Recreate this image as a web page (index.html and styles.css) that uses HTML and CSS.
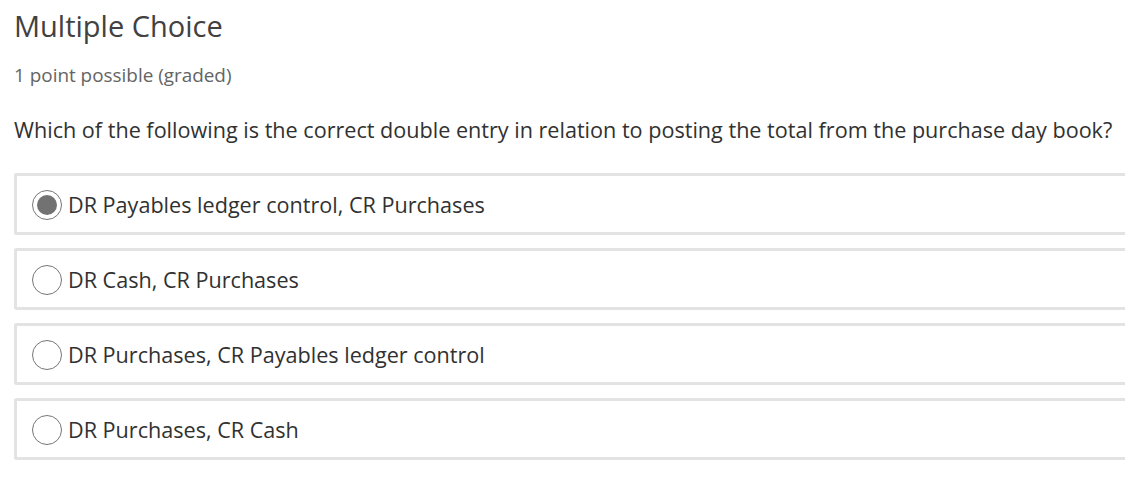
FILE: index.html
```html
<!DOCTYPE html>
<html>
<head>
<meta charset="utf-8">
<link rel="stylesheet" href="styles.css">
</head>
<body>
<div class="problem">
  <h3 class="title">Multiple Choice</h3>
  <div class="points">1 point possible (graded)</div>
  <p class="question">Which of the following is the correct double entry in relation to posting the total from the purchase day book?</p>
  <div class="choices">
    <label class="choice">
      <span class="radio checked"></span>
      <span class="label-text">DR Payables ledger control, CR Purchases</span>
    </label>
    <label class="choice">
      <span class="radio"></span>
      <span class="label-text">DR Cash, CR Purchases</span>
    </label>
    <label class="choice">
      <span class="radio"></span>
      <span class="label-text">DR Purchases, CR Payables ledger control</span>
    </label>
    <label class="choice">
      <span class="radio"></span>
      <span class="label-text">DR Purchases, CR Cash</span>
    </label>
  </div>
</div>
</body>
</html>
```
FILE: styles.css
```css
html, body {
  margin: 0;
  padding: 0;
  background: #ffffff;
}
body {
  font-family: "Open Sans", "DejaVu Sans", sans-serif;
  color: #313131;
}
.problem {
  padding: 0 6px 0 14px;
}
.title {
  margin: 0;
  padding-top: 6px;
  font-size: 29px;
  font-weight: 400;
  line-height: 40px;
  color: #414141;
}
.points {
  margin-top: 18px;
  font-size: 18.9px;
  line-height: 22px;
  color: #646464;
}
.question {
  margin: 30px 0 0 0;
  font-size: 21.6px;
  line-height: 28px;
  color: #313131;
  white-space: nowrap;
}
.choices {
  margin-top: 29px;
  display: flex;
  flex-direction: column;
  gap: 13px;
}
.choice {
  display: flex;
  align-items: center;
  height: 56px;
  border: 3px solid #e3e3e3;
  border-right: none;
  border-radius: 3px 0 0 3px;
  padding-left: 15px;
  box-sizing: content-box;
}
.radio {
  width: 28px;
  height: 28px;
  border: 1px solid #767676;
  border-radius: 50%;
  box-sizing: content-box;
  display: flex;
  align-items: center;
  justify-content: center;
  flex: none;
  margin-right: 6px;
  margin-top: 2px;
  background: #fff;
}
.radio.checked::after {
  content: "";
  width: 20px;
  height: 20px;
  border-radius: 50%;
  background: #727272;
}
.label-text {
  font-size: 21.6px;
  line-height: 28px;
  padding-top: 2px;
  color: #313131;
}
```
